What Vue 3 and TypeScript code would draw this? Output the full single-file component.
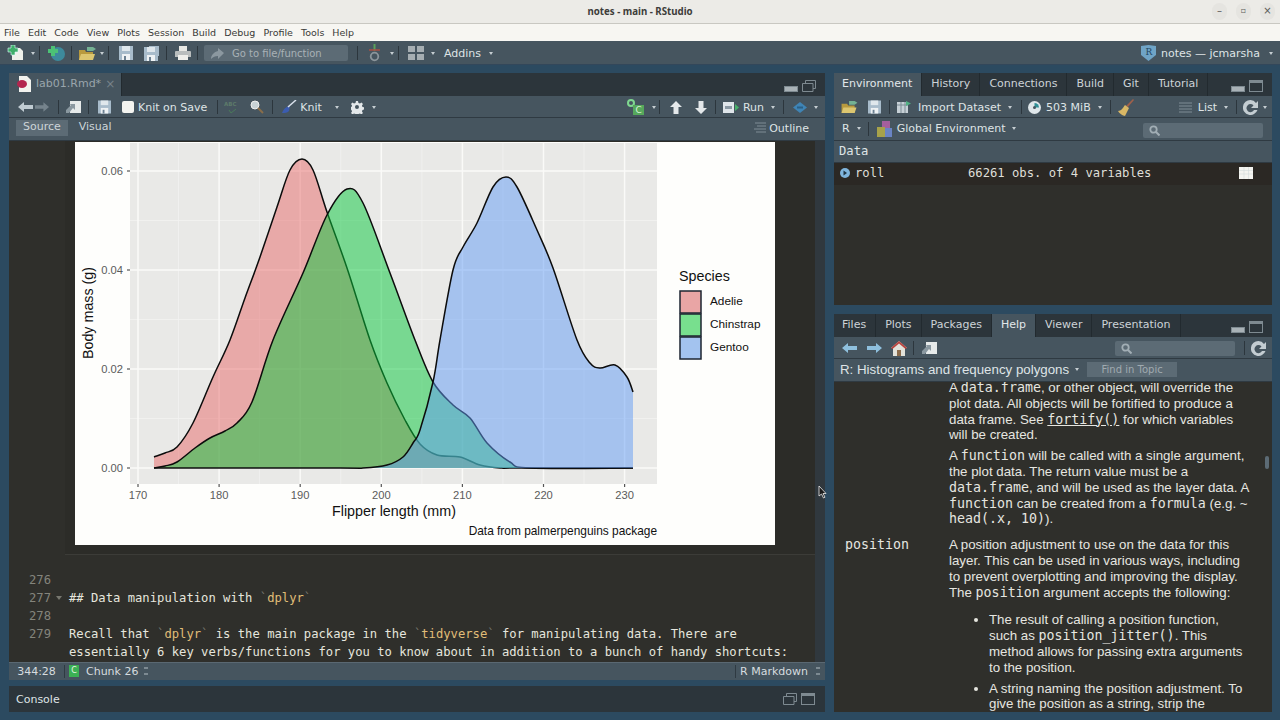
<script setup lang="ts">
interface Pt { x: number; y: number }

// curve outlines in page pixels, the svg viewBox is offset so these can be read straight off the picture
const adelie: [number, number][] = [[154, 457], [165, 453], [177, 447], [193, 423], [213, 377], [230, 340], [245, 298], [260, 257], [277, 207], [290, 170], [302, 159], [313, 170], [327, 212], [347, 268], [370, 340], [387, 383], [405, 420], [420, 444], [437, 455], [460, 457], [480, 465], [500, 468], [520, 468], [633, 468]]
const chinstrap: [number, number][] = [[154, 468], [165, 466], [177, 462], [195, 448], [210, 438], [225, 431], [237, 423], [252, 402], [273, 340], [303, 273], [327, 215], [347, 189], [363, 203], [390, 273], [415, 340], [433, 382], [453, 405], [470, 418], [487, 443], [510, 462], [530, 468], [633, 468]]
const gentoo: [number, number][] = [[154, 468], [340, 468], [363, 468], [387, 465], [403, 457], [413, 443], [420, 430], [433, 382], [440, 340], [453, 270], [463, 247], [477, 223], [493, 187], [506, 177], [517, 187], [537, 230], [553, 268], [577, 340], [590, 363], [600, 368], [615, 365], [627, 377], [633, 392]]

function smooth(raw: [number, number][]): string {
  const p: Pt[] = raw.map(([x, y]) => ({ x, y }))
  let d = `M${p[0].x} ${p[0].y}`
  for (let i = 0; i < p.length - 1; i++) {
    const a = p[Math.max(i - 1, 0)]
    const b = p[i]
    const c = p[i + 1]
    const e = p[Math.min(i + 2, p.length - 1)]
    const c1x = b.x + (c.x - a.x) / 6
    const c1y = b.y + (c.y - a.y) / 6
    const c2x = c.x - (e.x - b.x) / 6
    const c2y = c.y - (e.y - b.y) / 6
    d += ` C${c1x.toFixed(1)} ${c1y.toFixed(1)} ${c2x.toFixed(1)} ${c2y.toFixed(1)} ${c.x} ${c.y}`
  }
  return d
}

function area(raw: [number, number][]): string {
  const last = raw[raw.length - 1]
  return `${smooth(raw)} L${last[0]} 468 L${raw[0][0]} 468 Z`
}

const species = [
  { name: 'Adelie', fill: '#e9a5a5', y: 291, h: 22 },
  { name: 'Chinstrap', fill: '#78df8e', y: 314, h: 22 },
  { name: 'Gentoo', fill: '#a3c3ef', y: 337, h: 22 }
]

const curves = [
  { id: 'a', fill: '#e8696a', d: area(adelie), line: smooth(adelie) },
  { id: 'c', fill: '#08c83c', d: area(chinstrap), line: smooth(chinstrap) },
  { id: 'g', fill: '#619cf6', d: area(gentoo), line: smooth(gentoo) }
]

const majorX = [170, 180, 190, 200, 210, 220, 230]
const majorY = [
  { label: '0.06', y: 171 },
  { label: '0.04', y: 270 },
  { label: '0.02', y: 369 },
  { label: '0.00', y: 468 }
]
const xPos = (v: number) => 138 + (v - 170) * 8.11
const minorX = [175, 185, 195, 205, 215, 225]
const minorY = [220.5, 319.5, 418.5]

const envTabs = ['History', 'Connections', 'Build', 'Git', 'Tutorial']
const helpTabsLeft = ['Files', 'Plots', 'Packages']
const helpTabsRight = ['Viewer', 'Presentation']
</script>

<template>
  <div class="window">
    <header class="titlebar">
      <span class="title">notes - main - RStudio</span>
      <div class="win-buttons">
        <span class="win-btn">–</span>
        <span class="win-btn small">▫</span>
        <span class="win-btn">×</span>
      </div>
    </header>

    <nav class="menubar">
      <span>File</span><span>Edit</span><span>Code</span><span>View</span><span>Plots</span><span>Session</span><span>Build</span><span>Debug</span><span>Profile</span><span>Tools</span><span>Help</span>
    </nav>

    <div class="maintools">
      <svg class="ic" width="19" height="16" viewBox="0 0 19 16" style="margin-left: 6px">
        <path d="M6 3h8l3 3v9H6z" fill="#eef0ea" /><path d="M5 0v3H2v4h3v3h4V7h3V3H9V0z" fill="#3fae6a" stroke="#dff" stroke-width=".6" />
      </svg>
      <i class="caret" style="margin-left: 6px"></i><i class="sep" style="margin-left: 4px"></i>
      <svg class="ic" width="20" height="16" viewBox="0 0 20 16" style="margin-left: 6px">
        <circle cx="12" cy="9" r="7" fill="#3d8a9c" /><path d="M5 1v3H2v4h3v3h4V8h3V4H9V1z" fill="#4cc276" />
      </svg>
      <i class="sep" style="margin-left: 5px"></i>
      <svg class="ic" width="19" height="15" viewBox="0 0 19 15" style="margin-left: 6px">
        <path d="M1 4h6l1 2h7v8H1z" fill="#b89a3e" /><path d="M3 8h14l-2 6H1z" fill="#dcc670" /><path d="M9 1h6l3 2-3 2H9z" fill="#7fc8a0" opacity=".8" />
      </svg>
      <i class="caret" style="margin-left: 3px"></i><i class="sep" style="margin-left: 4px"></i>
      <svg class="ic" width="14" height="14" viewBox="0 0 14 14" style="margin-left: 10px"><use href="#save" /></svg>
      <svg class="ic" width="15" height="15" viewBox="0 0 15 15" style="margin-left: 11px">
        <path d="M5 0h10v10h-3V3H5z" fill="#a8bccb" /><use href="#save" y="1" />
      </svg>
      <i class="sep" style="margin-left: 7px"></i>
      <svg class="ic" width="16" height="15" viewBox="0 0 16 15" style="margin-left: 8px">
        <path d="M4 0h8v5H4z" fill="#e8e8e4" /><path d="M1 5h14a1 1 0 0 1 1 1v5H0V6a1 1 0 0 1 1-1z" fill="#b9bdbd" /><path d="M3 9h10v5H3z" fill="#eeeeea" />
      </svg>
      <i class="sep" style="margin-left: 6px"></i>
      <div class="gofile">
        <svg width="13" height="11" viewBox="0 0 13 11"><path d="M7 0l6 5-6 6V8C4 8 2 9 0 11c0-4 3-7 7-8z" fill="#8b98a0" /></svg>
        <span>Go to file/function</span>
      </div>
      <i class="sep" style="margin-left: 9px"></i>
      <svg class="ic" width="13" height="18" viewBox="0 0 13 18" style="margin-left: 10px">
        <path d="M6.500 0v7" stroke="#5aa05a" stroke-width="2" /><path d="M1 6h11" stroke="#a94f45" stroke-width="1.500" /><circle cx="6.500" cy="12.500" r="3.800" fill="none" stroke="#8b959b" stroke-width="1.800" />
      </svg>
      <i class="caret" style="margin-left: 9px"></i><i class="sep" style="margin-left: 4px"></i>
      <svg class="ic" width="16" height="14" viewBox="0 0 16 14" style="margin-left: 9px">
        <path d="M0 0h7v6H0zM9 0h7v6H9zM0 8h7v6H0zM9 8h7v6H9z" fill="#a6aeb2" />
      </svg>
      <i class="caret" style="margin-left: 7px"></i>
      <span class="tool-label" style="margin-left: 9px">Addins</span>
      <i class="caret" style="margin-left: 8px"></i>
      <div class="project">
        <svg class="ic" width="15" height="16" viewBox="0 0 15 16"><path d="M0 1l7.500-1L15 1v9l-7.500 6L0 10z" fill="#6fa4c6" /><text x="4.500" y="10" class="r-glyph">R</text></svg>
        <span>notes — jcmarsha</span>
        <i class="caret" style="margin-left: 4px"></i>
      </div>
    </div>

    <main class="workspace">
      <section class="left">
        <div class="pane source-pane">
          <div class="tabs">
            <div class="tab active src-tab">
              <svg class="ic" width="15" height="16" viewBox="0 0 15 16"><path d="M2 0h8l4 4v12H2z" fill="#f2f2ee" /><ellipse cx="5" cy="8" rx="5" ry="4" fill="#b3254e" /></svg>
              <span class="dim">lab01.Rmd*</span>
              <span class="close">×</span>
            </div>
            <div class="pane-btns">
              <i class="min"></i>
              <svg class="ic" width="14" height="12" viewBox="0 0 14 12"><use href="#restore" /></svg>
            </div>
          </div>
          <div class="toolbar">
            <svg class="ic" width="15" height="10" viewBox="0 0 15 10" style="margin-left: 9px"><use href="#arrow" fill="#c0cbd2" /></svg>
            <svg class="ic flip" width="14" height="10" viewBox="0 0 15 10" style="margin-left: 2px"><use href="#arrow" fill="#75838c" /></svg>
            <i class="sep" style="margin-left: 9px"></i>
            <svg class="ic" width="15" height="12" viewBox="0 0 15 12" style="margin-left: 7px"><use href="#popout" /></svg>
            <i class="sep" style="margin-left: 7px"></i>
            <svg class="ic" width="13" height="14" viewBox="0 0 14 14" style="margin-left: 9px"><use href="#save" /></svg>
            <i class="check" style="margin-left: 11px"></i>
            <span class="tool-label" style="margin-left: 4px">Knit on Save</span>
            <i class="sep" style="margin-left: 10px"></i>
            <svg class="ic" width="16" height="14" viewBox="0 0 16 14" style="margin-left: 6px">
              <text x="0" y="6" class="abc">ABC</text><path d="M5 10l2 3 5-4" stroke="#4a7a5a" fill="none" />
            </svg>
            <svg class="ic" width="14" height="14" viewBox="0 0 14 14" style="margin-left: 10px">
              <circle cx="5" cy="5" r="4" fill="#c8d2d6" stroke="#eee" /><path d="M8 8l5 5" stroke="#8a6d4a" stroke-width="2" />
            </svg>
            <i class="sep" style="margin-left: 8px"></i>
            <svg class="ic" width="15" height="14" viewBox="0 0 15 14" style="margin-left: 9px">
              <path d="M0 13c2-5 5-7 8-7l-1 5c-2 2-4 2-7 2z" fill="#3b5cb0" /><path d="M6 7l8-7" stroke="#d8e0ea" stroke-width="1.500" />
            </svg>
            <span class="tool-label" style="margin-left: 3px">Knit</span>
            <i class="caret" style="margin-left: 13px"></i>
            <svg class="ic" width="13" height="13" viewBox="0 0 24 24" style="margin-left: 12px">
              <path d="M10 0h4l1 4 3 1 3-2 3 3-2 3 1 3 4 1v4l-4 1-1 3 2 3-3 3-3-2-3 1-1 4h-4l-1-4-3-1-3 2-3-3 2-3-1-3-4-1v-4l4-1 1-3-2-3 3-3 3 2 3-1zM12 8a4 4 0 1 0 0 8 4 4 0 0 0 0-8z" fill="#e4e8ea" transform="scale(.92)" fill-rule="evenodd" />
            </svg>
            <i class="caret" style="margin-left: 8px"></i>
            <svg class="ic push" width="18" height="16" viewBox="0 0 18 16">
              <circle cx="4" cy="4" r="3" fill="none" stroke="#7fd890" stroke-width="2" /><path d="M6 6h11v10H6z" fill="#56a85c" /><text x="8.500" y="14" class="c-glyph">C</text>
            </svg>
            <i class="caret" style="margin-left: 7px"></i><i class="sep" style="margin-left: 3px"></i>
            <svg class="ic" width="12" height="13" viewBox="0 0 12 13" style="margin-left: 10px"><path d="M6 0l6 6H8.500v7h-5V6H0z" fill="#e4e8ea" /></svg>
            <svg class="ic" width="12" height="13" viewBox="0 0 12 13" style="margin-left: 13px"><path d="M6 13l6-6H8.500V0h-5v7H0z" fill="#e4e8ea" /></svg>
            <i class="sep" style="margin-left: 8px"></i>
            <svg class="ic" width="16" height="11" viewBox="0 0 16 11" style="margin-left: 7px"><path d="M0 0h11v11H0z" fill="#dfe5ea" /><path d="M2 4h7v3H2z" fill="#8a98a4" /><path d="M12 2l4 3.500-4 3.500z" fill="#47b06a" /></svg>
            <span class="tool-label" style="margin-left: 4px">Run</span>
            <i class="caret" style="margin-left: 7px"></i><i class="sep" style="margin-left: 8px"></i>
            <svg class="ic" width="14" height="11" viewBox="0 0 14 11" style="margin-left: 9px"><path d="M7 0l7 5.500L7 11 0 5.500z" fill="#3f84b5" /><path d="M4 5.500h6" stroke="#2a5f85" stroke-width="2" /></svg>
            <i class="caret" style="margin-left: 7px; margin-right: 7px"></i>
          </div>
          <div class="toolbar subbar source-bar">
            <span class="seg on">Source</span>
            <span class="seg second">Visual</span>
            <svg class="outline-ic" width="13" height="12" viewBox="0 0 13 12"><path d="M2 1h11M4 4h9M1 7h12M3 10h10" stroke="#7f8d96" stroke-width="1" /></svg>
            <span class="tool-label outline-text">Outline</span>
          </div>

          <div class="editor-wrap">
            <div class="editor">
              <div class="chunk-row">
                <div class="gutter"></div>
                <div class="chunk">
                  <div class="figure">
                    <svg class="plot" width="700" height="403" viewBox="75 142 700 403">
                      <rect x="75" y="142" width="700" height="403" fill="#fefefc" />
                      <rect x="130" y="143" width="527" height="341" fill="#e9e9e7" />
                      <g stroke="#f3f3f1" stroke-width=".8">
                        <line v-for="v in minorX" :key="v" :x1="xPos(v)" :x2="xPos(v)" y1="143" y2="484" />
                        <line v-for="y in minorY" :key="y" x1="130" x2="657" :y1="y" :y2="y" />
                      </g>
                      <g stroke="#fafaf8" stroke-width="1.500">
                        <line v-for="v in majorX" :key="v" :x1="xPos(v)" :x2="xPos(v)" y1="143" y2="484" />
                        <line v-for="t in majorY" :key="t.label" x1="130" x2="657" :y1="t.y" :y2="t.y" />
                      </g>
                      <g v-for="c in curves" :key="c.id">
                        <path :d="c.d" :fill="c.fill" fill-opacity=".5" />
                        <path :d="c.line" fill="none" stroke="#0c0c0c" stroke-width="1.500" />
                      </g>
                      <g class="tick-label" text-anchor="end">
                        <text v-for="t in majorY" :key="t.label" x="123" :y="t.y + 3.500">{{ t.label }}</text>
                      </g>
                      <g stroke="#555" stroke-width="1.200">
                        <line v-for="t in majorY" :key="t.label" x1="127" x2="130" :y1="t.y" :y2="t.y" />
                        <line v-for="v in majorX" :key="v" :x1="xPos(v)" :x2="xPos(v)" y1="484" y2="487" />
                      </g>
                      <g class="tick-label" text-anchor="middle">
                        <text v-for="v in majorX" :key="v" :x="xPos(v)" y="499">{{ v }}</text>
                      </g>
                      <text class="axis-label" x="394" y="516" text-anchor="middle">Flipper length (mm)</text>
                      <text class="axis-label" transform="translate(93 313) rotate(-90)" text-anchor="middle">Body mass (g)</text>
                      <text class="axis-label" x="679" y="281">Species</text>
                      <g v-for="s in species" :key="s.name">
                        <rect x="680" :y="s.y" width="21" :height="s.h" :fill="s.fill" stroke="#1c2430" stroke-width="1.500" />
                        <text class="legend-label" x="710" :y="s.y + 13.500">{{ s.name }}</text>
                      </g>
                      <text class="caption" x="657" y="535" text-anchor="end">Data from palmerpenguins package</text>
                    </svg>
                  </div>
                </div>
              </div>

              <div class="code">
                <div class="line"><span class="num">276</span><span class="txt"></span></div>
                <div class="line"><span class="num">277</span><i class="fold"></i><span class="txt">## Data manipulation with <span class="bt">`</span><span class="y">dplyr</span><span class="bt">`</span></span></div>
                <div class="line"><span class="num">278</span><span class="txt"></span></div>
                <div class="line"><span class="num">279</span><span class="txt">Recall that <span class="bt">`</span><span class="y">dplyr</span><span class="bt">`</span> is the main package in the <span class="bt">`</span><span class="y">tidyverse</span><span class="bt">`</span> for manipulating data. There are</span></div>
                <div class="line"><span class="num"></span><span class="txt">essentially 6 key verbs/functions for you to know about in addition to a bunch of handy shortcuts:</span></div>
              </div>
            </div>
            <div class="vscroll"></div>
          </div>

          <div class="statusbar">
            <span class="pos">344:28</span>
            <i class="chunk-c">C</i>
            <span>Chunk 26</span><i class="updown"></i>
            <span class="mode">R Markdown</span><i class="updown end"></i>
          </div>
        </div>

        <div class="pane console-pane">
          <span>Console</span>
          <div class="pane-btns">
            <svg class="ic" width="14" height="12" viewBox="0 0 14 12"><use href="#restore" /></svg>
            <i class="max"></i>
          </div>
        </div>
      </section>

      <section class="right">
        <div class="pane env-pane">
          <div class="tabs">
            <div class="tab active">Environment</div>
            <div v-for="t in envTabs" :key="t" class="tab">{{ t }}</div>
            <div class="pane-btns"><i class="min"></i><i class="max"></i></div>
          </div>
          <div class="toolbar">
            <svg class="ic" width="19" height="14" viewBox="0 0 19 15" style="margin-left: 6px">
              <path d="M1 4h6l1 2h7v8H1z" fill="#b89a3e" /><path d="M3 8h14l-2 6H1z" fill="#dcc670" /><path d="M9 1h6l3 2-3 2H9z" fill="#7fc8a0" opacity=".8" />
            </svg>
            <svg class="ic" width="13" height="14" viewBox="0 0 14 14" style="margin-left: 9px"><use href="#save" /></svg>
            <i class="sep" style="margin-left: 8px"></i>
            <svg class="ic" width="16" height="12" viewBox="0 0 16 12" style="margin-left: 7px">
              <path d="M0 1h11v11H0z" fill="#c6d0d6" /><path d="M0 4h11M4 1v11M8 1v11" stroke="#7d8c95" /><path d="M9 0l5 2.500L9 5z" fill="#52b184" />
            </svg>
            <span class="tool-label" style="margin-left: 5px">Import Dataset</span>
            <i class="caret" style="margin-left: 7px"></i><i class="sep" style="margin-left: 9px"></i>
            <svg class="ic" width="13" height="13" viewBox="0 0 13 13" style="margin-left: 6px">
              <circle cx="6.500" cy="6.500" r="6.500" fill="#dfe6ea" /><path d="M6.500 6.500V2A4.500 4.500 0 0 1 11 6.500z" fill="#2f8f96" /><circle cx="6.500" cy="6.500" r="1.500" fill="#46555f" />
            </svg>
            <span class="tool-label" style="margin-left: 5px">503 MiB</span>
            <i class="caret" style="margin-left: 7px"></i><i class="sep" style="margin-left: 8px"></i>
            <svg class="ic" width="16" height="17" viewBox="0 0 16 17" style="margin-left: 7px">
              <path d="M15 0l1 1-6 7-2-1z" fill="#a0604a" /><path d="M7 6l4 3-4 8c-2 0-6-3-7-5 3 0 5-3 7-6z" fill="#d8b765" />
            </svg>
            <svg class="ic push" width="13" height="11" viewBox="0 0 13 11"><path d="M0 1h13M0 4h13M0 7h13M0 10h13" stroke="#7f8d96" /></svg>
            <span class="tool-label" style="margin-left: 6px">List</span>
            <i class="caret" style="margin-left: 7px"></i><i class="sep" style="margin-left: 8px"></i>
            <svg class="ic" width="15" height="15" viewBox="0 0 15 15" style="margin-left: 6px"><use href="#refresh" /></svg>
            <i class="caret" style="margin-left: 5px; margin-right: 5px"></i>
          </div>
          <div class="toolbar subbar">
            <span class="tool-label" style="margin-left: 8px">R</span>
            <i class="caret" style="margin-left: 7px"></i><i class="sep" style="margin-left: 7px"></i>
            <svg class="ic" width="15" height="16" viewBox="0 0 15 16" style="margin-left: 8px">
              <path d="M5 0h8v7H5z" fill="#a45f9e" /><path d="M0 6h8v10H0z" fill="#a7a24a" /><path d="M8 7h7v9H8z" fill="#6a84c4" />
            </svg>
            <span class="tool-label" style="margin-left: 5px">Global Environment</span>
            <i class="caret" style="margin-left: 7px"></i>
            <div class="search env-search"><svg width="11" height="11" viewBox="0 0 11 11"><use href="#mag" /></svg></div>
          </div>
          <div class="data-head">Data</div>
          <div class="data-row">
            <svg class="ic" width="10" height="10" viewBox="0 0 10 10"><circle cx="5" cy="5" r="5" fill="#7fb5dc" /><path d="M3.500 2.500L7 5 3.500 7.500z" fill="#1f3442" /></svg>
            <span class="var-name">roll</span>
            <span class="var-val">66261 obs. of 4 variables</span>
            <svg class="grid-ic" width="14" height="12" viewBox="0 0 14 12"><path d="M0 0h14v12H0z" fill="#f4f4f0" /><path d="M0 3.500h14M0 7h14M5 0v12M9.500 0v12" stroke="#d4dcdc" stroke-width=".6" /></svg>
          </div>
          <div class="env-body"></div>
        </div>

        <div class="pane help-pane">
          <div class="tabs">
            <div v-for="t in helpTabsLeft" :key="t" class="tab">{{ t }}</div>
            <div class="tab active">Help</div>
            <div v-for="t in helpTabsRight" :key="t" class="tab">{{ t }}</div>
            <div class="pane-btns"><i class="min"></i><i class="max"></i></div>
          </div>
          <div class="toolbar">
            <svg class="ic" width="15" height="10" viewBox="0 0 15 10" style="margin-left: 8px"><use href="#arrow" fill="#8fc0de" /></svg>
            <svg class="ic flip" width="15" height="10" viewBox="0 0 15 10" style="margin-left: 10px"><use href="#arrow" fill="#8fc0de" /></svg>
            <svg class="ic" width="16" height="15" viewBox="0 0 16 15" style="margin-left: 9px">
              <path d="M8 0l8 7h-2v8H2V7H0z" fill="#e2e2da" /><path d="M8 0l8 7-1.500 1L8 2.500 1.500 8 0 7z" fill="#b8433e" /><path d="M6 9h4v6H6z" fill="#8a6a4a" />
            </svg>
            <i class="sep" style="margin-left: 6px"></i>
            <svg class="ic" width="15" height="12" viewBox="0 0 15 12" style="margin-left: 8px"><use href="#popout" /></svg>
            <div class="search help-search"><svg width="11" height="11" viewBox="0 0 11 11"><use href="#mag" /></svg></div>
            <i class="sep" style="margin-left: 9px"></i>
            <svg class="ic" width="15" height="15" viewBox="0 0 15 15" style="margin-left: 6px; margin-right: 6px"><use href="#refresh" /></svg>
          </div>
          <div class="toolbar subbar help-title">
            <span>R: Histograms and frequency polygons</span>
            <i class="caret" style="margin-left: 6px"></i>
            <div class="find">Find in Topic</div>
          </div>
          <div class="help-body">
            <div class="scroll-thumb"></div>
            <div class="arg first">
              <code class="arg-name"></code>
              <div class="arg-desc">
                <p>A <code>data.frame</code>, or other object, will override the<br>plot data. All objects will be fortified to produce a<br>data frame. See <code class="link">fortify()</code> for which variables<br>will be created.</p>
                <p>A <code>function</code> will be called with a single argument,<br>the plot data. The return value must be a<br><code>data.frame</code>, and will be used as the layer data. A<br><code>function</code> can be created from a <code>formula</code> (e.g. ~<br><code>head(.x, 10)</code>).</p>
              </div>
            </div>
            <div class="arg">
              <code class="arg-name">position</code>
              <div class="arg-desc">
                <p>A position adjustment to use on the data for this<br>layer. This can be used in various ways, including<br>to prevent overplotting and improving the display.<br>The <code>position</code> argument accepts the following:</p>
                <ul>
                  <li>The result of calling a position function,<br>such as <code>position_jitter()</code>. This<br>method allows for passing extra arguments<br>to the position.</li>
                  <li>A string naming the position adjustment. To<br>give the position as a string, strip the</li>
                </ul>
              </div>
            </div>
          </div>
        </div>
      </section>
    </main>

    <!-- mouse pointer sitting on the splitter -->
    <svg class="pointer" width="9" height="14" viewBox="0 0 9 14"><path d="M1 1v10l2.500-2 2 4 1.500-.8-2-3.700H8z" fill="#1b1b1b" stroke="#eee" stroke-width=".8" /></svg>

    <svg width="0" height="0" class="defs">
      <defs>
        <g id="save"><path d="M0 0h14v14H0z" fill="#a8bccb" /><path d="M3 0h8v5H3z" fill="#dfe7ec" /><path d="M3 8h8v6H3z" fill="#eef2f4" /><path d="M5 10h2v4H5z" fill="#6c8192" /></g>
        <g id="arrow"><path d="M6 0v3h9v4H6v3L0 5z" /></g>
        <g id="popout"><path d="M4 0h11v12H4z" fill="#e6eaea" /><path d="M0 9l5-5-2-1h6v6L7 7l-4 5H0z" fill="#8a98a0" /></g>
        <g id="refresh"><path d="M7.500 0a7.500 7.500 0 1 0 7 10h-3.500a4 4 0 1 1-.5-4.500L8 8h7V1l-2 2A7.500 7.500 0 0 0 7.500 0z" fill="#c4cdd2" /></g>
        <g id="mag"><circle cx="4.500" cy="4.500" r="3.200" fill="none" stroke="#a2aeb5" stroke-width="1.800" /><path d="M7 7l3.500 3.500" stroke="#a2aeb5" stroke-width="2" /></g>
        <g id="restore"><path d="M3.500 3V.5h10v8H11" fill="none" stroke="#7e8a91" /><path d="M.5 3.500h10.500v8H.5z" fill="none" stroke="#7e8a91" /></g>
      </defs>
    </svg>
  </div>
</template>

<style>
html, body { margin: 0; background: #2c4a60; }
</style>

<style scoped>
.window {
  position: relative;
  width: 1280px;
  height: 720px;
  overflow: hidden;
  display: flex;
  flex-direction: column;
  background: #2c4a60;
  font-family: "DejaVu Sans", sans-serif;
  font-size: 11px;
  color: #dfe4e6;
}
.defs { position: absolute; }

.titlebar {
  height: 24px;
  flex: none;
  display: flex;
  align-items: center;
  justify-content: center;
  background: #ecebe7;
  border-bottom: 1px solid #c9c8c2;
  box-sizing: border-box;
  position: relative;
}
.title { font: 700 9.700px "Noto Sans", sans-serif; color: #3d3d3a; }
.win-buttons { position: absolute; right: 5px; top: 3px; display: flex; gap: 9px; }
.win-btn {
  width: 15px;
  height: 17px;
  border-radius: 8px;
  background: #e5e4e0;
  color: #5a5a58;
  font-size: 10px;
  line-height: 16px;
  text-align: center;
}
.win-btn.small { font-size: 8px; }

.menubar {
  height: 17px;
  flex: none;
  display: flex;
  align-items: center;
  gap: 8px;
  padding-left: 4px;
  background: #f7f6f2;
  color: #3a3a38;
  font-size: 9.500px;
}

.maintools {
  height: 24px;
  flex: none;
  display: flex;
  align-items: center;
  padding-top: 1px;
  background: #46555f;
  border-bottom: 1px solid #33475a;
  box-sizing: border-box;
}
.ic { flex: none; display: block; }
.flip { transform: scaleX(-1); }
.push { margin-left: auto; }
.sep { display: block; flex: none; width: 1px; height: 14px; background: #2c363d; }
.caret {
  display: block;
  flex: none;
  width: 0;
  height: 0;
  border-left: 2.500px solid transparent;
  border-right: 2.500px solid transparent;
  border-top: 3px solid #c6ced2;
}
.tool-label { color: #dfe4e6; white-space: nowrap; }
.gofile {
  width: 144px;
  height: 16px;
  flex: none;
  margin-left: 6px;
  display: flex;
  align-items: center;
  gap: 8px;
  padding-left: 7px;
  box-sizing: border-box;
  background: #5c6b75;
  border-radius: 2px;
  color: #a8b1b6;
  font-size: 10px;
}
.project {
  margin-left: auto;
  margin-right: 7px;
  display: flex;
  align-items: center;
  gap: 5px;
  color: #dfe4e6;
}
.r-glyph { font-size: 9px; fill: #24465e; font-family: "DejaVu Serif", serif; }

.workspace {
  flex: 1;
  min-height: 0;
  display: flex;
  gap: 9px;
  padding: 8px 8px 8px 9px;
}
.left { width: 816px; display: flex; flex-direction: column; gap: 6px; }
.right { width: 438px; display: flex; flex-direction: column; gap: 9px; }
.pane { display: flex; flex-direction: column; min-height: 0; overflow: hidden; }

.tabs {
  height: 23px;
  flex: none;
  display: flex;
  background: #2c353b;
}
.tab {
  display: flex;
  align-items: center;
  padding: 0 9px 2px;
  border-right: 1px solid #222a2f;
  color: #ccd3d7;
  white-space: nowrap;
}
.tab:first-child { padding-left: 8px; }
.tab.active { background: #46555f; color: #e2e7ea; }
.src-tab { width: 113px; box-sizing: border-box; gap: 4px; }
.dim { color: #9aa5ac; }
.close { margin-left: 0; color: #76828a; font-size: 12px; }
.pane-btns { margin-left: auto; display: flex; align-items: flex-end; gap: 4px; padding: 0 9px 4px 0; align-self: flex-end; }
.min { display: block; width: 14px; height: 6px; border: 1px solid #7e8a91; background: #a9b2b7; box-sizing: border-box; }
.max { display: block; width: 14px; height: 12px; border: 1px solid #7e8a91; border-top-width: 3px; box-sizing: border-box; }

.toolbar {
  height: 22px;
  flex: none;
  display: flex;
  align-items: center;
  padding-top: 1px;
  background: #46555f;
  border-bottom: 1px solid #2f3a42;
  box-sizing: border-box;
}
.subbar { height: 23px; padding-top: 0; padding-bottom: 1px; }
.source-bar { padding-bottom: 2px; }
.seg { padding: 0 7px; margin-left: 7px; color: #ccd4d8; height: 16px; line-height: 14px; }
.seg.on { background: #5c6b75; margin-right: 4px; }
.seg.second { margin-left: 0; }
.outline-ic { margin-left: auto; }
.outline-text { margin: 0 16px 0 3px; }
.check { display: block; flex: none; width: 12px; height: 12px; border-radius: 2px; background: #f4f4f0; }
.c-glyph { font-size: 9px; fill: #d7f2d7; }
.abc { font-size: 5.500px; fill: #5d7a6a; font-weight: 700; }

.source-pane { height: 607px; }
.editor-wrap { flex: 1; min-height: 0; display: flex; }
.editor { width: 806px; flex: none; background: #2f2f2b; overflow: hidden; }
.vscroll { flex: 1; background: #30383e; }
.chunk-row { display: flex; height: 414px; }
.gutter { width: 56px; flex: none; }
.chunk {
  flex: none;
  width: 750px;
  padding-top: 1px;
  background: #2c2c28;
  border-bottom: 1px solid #3c3c38;
  box-sizing: border-box;
}
.figure { margin-left: 10px; height: 403px; }
.plot { display: block; }
.tick-label text { font: 11.200px "Liberation Sans", sans-serif; fill: #5b5b5b; }
.axis-label { font: 14.300px "Liberation Sans", sans-serif; fill: #111; }
.legend-label { font: 11.800px "Liberation Sans", sans-serif; fill: #111; }
.caption { font: 11.900px "Liberation Sans", sans-serif; fill: #111; }

.code { padding-top: 15.500px; }
.line {
  display: flex;
  height: 18px;
  align-items: center;
  font-family: "DejaVu Sans Mono", monospace;
  font-size: 12.200px;
  white-space: nowrap;
  position: relative;
}
.num { width: 42px; flex: none; color: #84847c; text-align: right; }
.txt { position: absolute; left: 60px; color: #e6e6de; }
.y { color: #e0bd78; }
.bt { color: #77776f; }
.fold { position: absolute; left: 47px; width: 0; height: 0; border-left: 3px solid transparent; border-right: 3px solid transparent; border-top: 4px solid #77776f; }

.statusbar {
  height: 18px;
  flex: none;
  display: flex;
  align-items: center;
  padding-bottom: 1px;
  background: #46555f;
  font-size: 11px;
  color: #d6dcdf;
  border-top: 1px solid #5a6872;
  box-sizing: border-box;
}
.pos { width: 56px; text-align: center; border-right: 1px solid #2f3a42; margin-right: 4px; box-sizing: border-box; }
.chunk-c {
  width: 10px;
  height: 12px;
  margin-right: 7px;
  background: #3cb054;
  color: #e8f6e8;
  font-size: 8px;
  font-style: normal;
  text-align: center;
  line-height: 12px;
}
.updown { display: block; width: 4px; height: 8px; margin: 0 3px 0 6px; border-top: 2px dotted #7d8a92; border-bottom: 2px dotted #7d8a92; box-sizing: border-box; }
.updown.end { margin: 0 5px 0 8px; }
.mode { margin-left: auto; padding-left: 4px; border-left: 1px solid #2f3a42; }

.console-pane {
  height: 26px;
  flex: none;
  flex-direction: row;
  align-items: center;
  padding-left: 7px;
  background: #2c353b;
  font-size: 11px;
}
.console-pane .pane-btns { align-self: center; padding: 0 10px 0 0; }

.env-pane { height: 232px; flex: none; }
.data-head {
  height: 22px;
  flex: none;
  display: flex;
  align-items: center;
  padding: 0 0 1px 5px;
  background: #46555f;
  font: 12.200px "DejaVu Sans Mono", monospace;
  border-bottom: 1px solid #2f3a42;
  box-sizing: border-box;
}
.data-row {
  height: 22px;
  flex: none;
  display: flex;
  align-items: center;
  padding: 0 0 2px 6px;
  background: #2b2824;
  font: 12.200px "DejaVu Sans Mono", monospace;
  color: #dfdfd8;
  box-sizing: border-box;
}
.var-name { margin-left: 5px; width: 113px; }
.grid-ic { margin-left: auto; margin-right: 19px; }
.env-body { flex: 1; background: #2f2f2b; }

.search { height: 15px; background: #5c6b75; border-radius: 2px; display: flex; align-items: center; padding-left: 6px; box-sizing: border-box; }
.env-search { width: 120px; margin: 3px 9px 0 auto; }
.help-search { width: 120px; margin-left: auto; }

.help-pane { flex: 1; }
.help-title { font: 13.300px "Liberation Sans", sans-serif; color: #dfe4e6; padding-left: 6px; }
.find {
  margin: 0 0 1px 8px;
  width: 90px;
  height: 15px;
  background: #5c6b75;
  color: #a0aab0;
  text-align: center;
  font: 10px/15px "DejaVu Sans", sans-serif;
}
.help-body {
  flex: 1;
  min-height: 0;
  position: relative;
  overflow: hidden;
  background: #2f2f2b;
  color: #e6e6e0;
  font: 13.300px/15.800px "Liberation Sans", sans-serif;
  padding: 0 0 0 11px;
}
.scroll-thumb { position: absolute; left: 431px; top: 74px; width: 4px; height: 13px; background: #5c6b75; border-radius: 2px; }
.arg { display: flex; margin-top: 5px; }
.arg.first { margin-top: -2px; }
.arg-name { width: 104px; flex: none; }
.arg-desc p { margin: 0 0 5px; }
code { font: 13.300px/15.800px "DejaVu Sans Mono", monospace; }
.link { text-decoration: underline; }
ul { margin: 12px 0 0; padding: 0 0 0 40px; }
li { margin-bottom: 5px; }

.pointer { position: absolute; left: 818px; top: 485px; }
</style>
